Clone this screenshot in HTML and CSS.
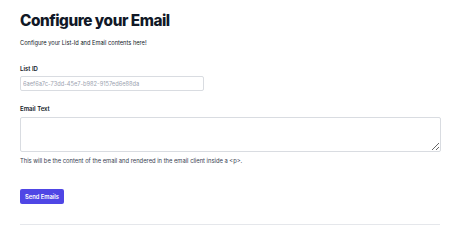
FILE: index.html
```html
<!DOCTYPE html>
<html>
<head>
<meta charset="utf-8">
<link rel="stylesheet" href="styles.css">
</head>
<body>
<main class="page">
  <h1 class="title">Configure your Email</h1>
  <p class="subtitle">Configure your List-Id and Email contents here!</p>
  <div class="field">
    <label class="label">List ID</label>
    <input class="input" type="text" placeholder="6aef6a7c-73dd-45e7-b982-9157ed6e88da">
  </div>
  <div class="field field-text">
    <label class="label">Email Text</label>
    <textarea class="textarea"></textarea>
    <p class="help">This will be the content of the email and rendered in the email client inside a &lt;p&gt;.</p>
  </div>
  <button class="btn">Send Emails</button>
  <hr class="rule">
</main>
</body>
</html>
```
FILE: styles.css
```css
* { box-sizing: border-box; }
html, body { margin: 0; padding: 0; background: #fff; }
body { font-family: Inter, "Noto Sans", sans-serif; color: #111827; }
.page { width: 420px; margin-left: 20px; padding-top: 10px; display: flex; flex-direction: column; }
.title { margin: 0; font-size: 15.3px; font-weight: 800; line-height: 22px; letter-spacing: -0.45px; color: #111827; }
.subtitle { margin: 6px 0 0; font-size: 5.7px; line-height: 10px; color: #111827; }
.field { display: flex; flex-direction: column; margin-top: 16px; }
.label { font-size: 6px; font-weight: 600; line-height: 10px; color: #111827; }
.input { margin-top: 2px; width: 184px; height: 15px; border: 1px solid #d9dce1; border-radius: 2px; padding: 0 2px; font-family: Inter, sans-serif; font-size: 5.7px; color: #111827; outline: none; }
.input::placeholder { color: #9ca3af; }
.field-text { margin-top: 13px; }
.textarea { margin-top: 3px; width: 421px; height: 35px; border: 1px solid #d9dce1; border-radius: 2px; resize: vertical; font-family: Inter, sans-serif; font-size: 6px; padding: 4px 6px; display: block; }
.help { margin: 4px 0 0; font-size: 5.8px; line-height: 10px; color: #374151; }
.btn { margin-top: 23px; align-self: flex-start; width: 44px; height: 15px; background: #4f46e5; color: #fff; border: none; border-radius: 2px; font-family: Inter, sans-serif; font-size: 5.8px; font-weight: 600; padding: 0; }
.rule { margin: 20px 0 0; border: none; border-top: 1px solid #e5e7eb; width: 420px; }
```
